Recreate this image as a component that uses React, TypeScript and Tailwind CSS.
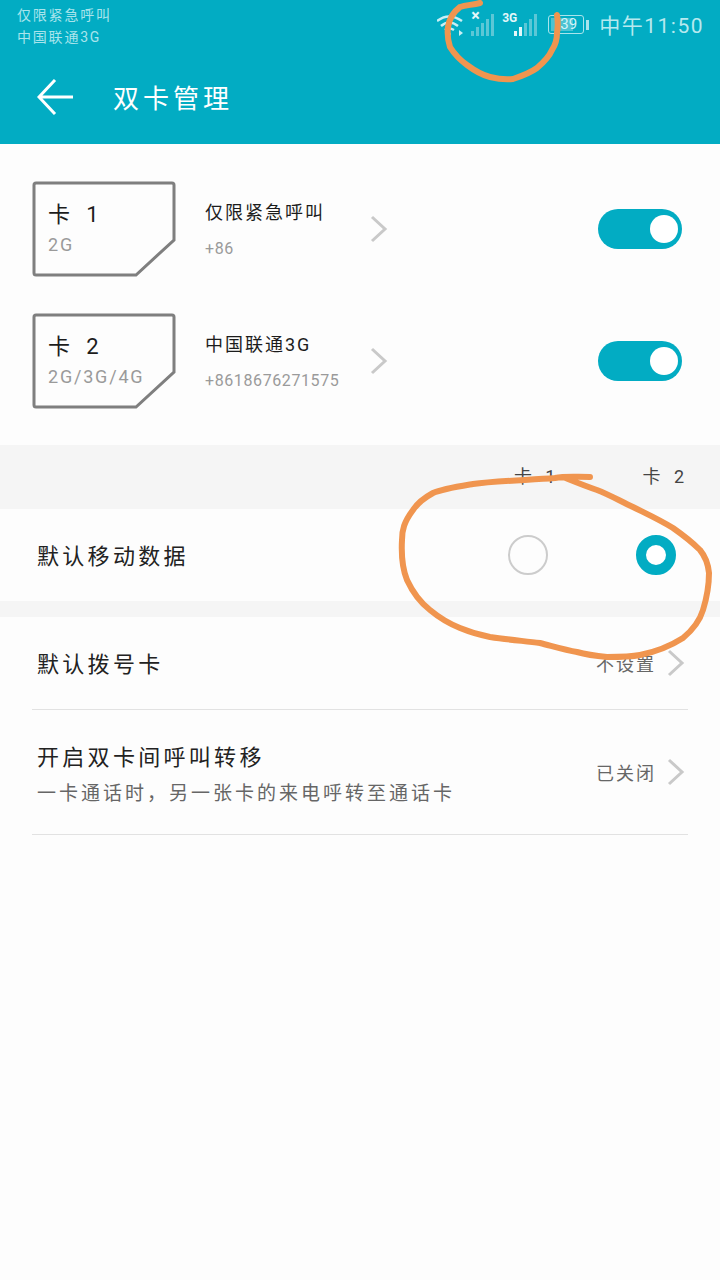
import React from "react";

interface SimRowProps {
  slot: string;
  bands: string;
  name: string;
  phone: string;
}

const Chevron = ({ className }: { className?: string }) => (
  <svg width="18" height="28" viewBox="0 0 18 28" fill="none" className={className}>
    <path d="M2 2 L15 14 L2 26" stroke="#c9c9c9" strokeWidth="3" />
  </svg>
);

const SignalBars = ({ active }: { active: number }) => (
  <div className="flex items-end gap-[2px] h-[22px]">
    {[5, 9, 13, 17, 22].map((h, i) => (
      <div
        key={h}
        className={i < active ? "w-[3px] bg-[#e4f7f9]" : "w-[3px] bg-[#5cc7d6]"}
        style={{ height: h }}
      />
    ))}
  </div>
);

const SimCard = ({ slot, bands }: { slot: string; bands: string }) => (
  <div className="relative w-[144px] h-[96px] pl-[16px] pt-[20px]">
    <svg width="144" height="96" viewBox="0 0 144 96" fill="none" className="absolute left-0 top-0">
      <path
        d="M2 4 Q2 2 4 2 L140 2 Q142 2 142 4 L142 59 L104 94 L4 94 Q2 94 2 92 Z"
        stroke="#7f7f7f"
        strokeWidth="3"
      />
    </svg>
    <div className="relative text-[22px] leading-[28px] text-[#1c1c1c] whitespace-pre">{slot}</div>
    <div className="relative mt-[4px] text-[18px] leading-[24px] text-[#9a9a9a] whitespace-nowrap tracking-[1.8px]">{bands}</div>
  </div>
);

const SimRow = ({ slot, bands, name, phone }: SimRowProps) => (
  <div className="flex items-center h-[96px]">
    <SimCard slot={slot} bands={bands} />
    <div className="ml-[29px] w-[165px] pt-[2px]">
      <div className="text-[18px] leading-[24px] tracking-[2px] text-[#1c1c1c] whitespace-nowrap">{name}</div>
      <div className="mt-[13px] text-[16px] leading-[22px] tracking-[0.6px] text-[#9a9a9a]">{phone}</div>
    </div>
    <Chevron />
    <div className="ml-auto w-[84px] h-[40px] rounded-full bg-[#02acc3] flex items-center justify-end pr-[4px]">
      <div className="w-[28px] h-[28px] rounded-full bg-white" />
    </div>
  </div>
);

export default function App() {
  return (
    <div
      lang="zh-CN"
      className="relative w-[720px] h-[1280px] overflow-hidden bg-[#fdfdfd] font-['Roboto','Noto_Sans_CJK_SC',sans-serif]"
    >
      <header className="h-[144px] bg-[#02acc3]">
        <div className="flex justify-between h-[52px] pl-[17px] pr-[16px]">
          <div className="pt-[4px] text-[14px] leading-[22px] tracking-[1.8px] text-[#a9e4ec]">
            <div>仅限紧急呼叫</div>
            <div>中国联通3G</div>
          </div>
          <div className="flex items-center h-[50px] pb-[1px]">
            {/* wifi with the small up/down arrows */}
            <svg width="27" height="22" viewBox="0 0 27 22" fill="none" className="mr-[7px]">
              <path d="M0 7 Q12 -2 25 7" stroke="#c9eff4" strokeWidth="2.5" />
              <path d="M4 12 Q12 5 21 12" stroke="#c9eff4" strokeWidth="2.5" />
              <path d="M8 16 Q12 13 17 16" stroke="#c9eff4" strokeWidth="2.5" />
              <circle cx="12" cy="20" r="1.8" fill="#c9eff4" />
              <path d="M22 16 L26 19 L22 22 Z" fill="#c9eff4" />
            </svg>
            <div className="relative mr-[8px]">
              <span className="absolute -top-[5px] left-0 text-[16px] leading-[14px] font-bold text-[#e4f7f9]">×</span>
              <SignalBars active={0} />
            </div>
            <div className="relative w-[35px] h-[22px] mr-[11px]">
              <span className="absolute -top-[3px] left-0 text-[12px] leading-[14px] font-bold text-[#e4f7f9]">3G</span>
              <div className="absolute bottom-0 right-0">
                <SignalBars active={2} />
              </div>
            </div>
            <div className="relative w-[36px] h-[19px] rounded-[3px] border border-[#a9e4ec] text-[15px] leading-[17px] text-right pr-[6px] text-[#d4f3f7]">
              <div className="absolute left-[2px] top-[2px] bottom-[2px] w-[22px] bg-[#4cc3d3]" />
              <span className="relative">39</span>
            </div>
            <div className="w-[3px] h-[10px] ml-[2px] mr-[10px] bg-[#a9e4ec]" />
            <div className="pt-[2px] text-[21px] leading-[28px] tracking-[1.5px] text-[#b7e9ef]">中午11:50</div>
          </div>
        </div>
        <div className="flex items-center h-[92px] pl-[37px] pb-[2px]">
          <svg width="37" height="36" viewBox="0 0 37 36" fill="none">
            <path d="M36 18 L2 18 M18 1 L2 18 L18 35" stroke="#ffffff" strokeWidth="3" />
          </svg>
          <div className="ml-[39px] pt-[4px] text-[26px] leading-[34px] tracking-[4px] text-white">双卡管理</div>
        </div>
      </header>

      <section className="pl-[32px] pr-[38px] pt-[37px] pb-[36px] flex flex-col gap-[36px]">
        <SimRow slot="卡   1" bands="2G" name="仅限紧急呼叫" phone="+86" />
        <SimRow slot="卡   2" bands="2G/3G/4G" name="中国联通3G" phone="+8618676271575" />
      </section>

      <div className="h-[64px] bg-[#f5f5f5] flex items-center justify-end gap-[87px] pr-[36px] text-[18px] leading-[24px] text-[#444444] whitespace-pre">
        <span>卡   1</span>
        <span>卡   2</span>
      </div>

      <div className="h-[92px] flex items-center pl-[37px] pr-[44px]">
        <span className="pt-[3px] text-[22px] tracking-[3.3px] text-[#222222]">默认移动数据</span>
        <div className="ml-auto flex items-center gap-[88px]">
          <div className="w-[40px] h-[40px] rounded-full border-2 border-[#cccccc]" />
          <div className="w-[40px] h-[40px] rounded-full border-[10px] border-[#02acc3] bg-white" />
        </div>
      </div>

      <div className="h-[16px] bg-[#f5f5f5]" />

      <div className="mx-[32px] h-[93px] border-b border-[#e2e2e2] flex items-center pl-[5px]">
        <span className="pt-[3px] text-[22px] tracking-[3.3px] text-[#222222]">默认拨号卡</span>
        <div className="ml-auto flex items-center gap-[11px] pr-[3px]">
          <span className="pt-[2px] text-[18px] tracking-[2px] text-[#666666]">不设置</span>
          <Chevron />
        </div>
      </div>

      <div className="mx-[32px] h-[125px] border-b border-[#e2e2e2] flex items-center pl-[5px]">
        <div className="pt-[4px]">
          <div className="text-[22px] leading-[32px] tracking-[3.3px] text-[#222222]">开启双卡间呼叫转移</div>
          <div className="mt-[7px] text-[19px] leading-[26px] tracking-[3px] text-[#666666] whitespace-nowrap">
            一卡通话时，另一张卡的来电呼转至通话卡
          </div>
        </div>
        <div className="ml-auto flex items-center gap-[11px] pr-[3px]">
          <span className="pt-[2px] text-[18px] tracking-[2px] text-[#666666]">已关闭</span>
          <Chevron />
        </div>
      </div>

      {/* orange marker strokes drawn over the page */}
      <svg width="720" height="1280" viewBox="0 0 720 1280" fill="none" className="absolute left-0 top-0 pointer-events-none">
        <path
          d="M590 477 C575 477 565 476 555 478 C530 480 495 481 473 484 C455 487 442 489 433 493 C422 499 417 504 413 510 C404 522 402 530 402 540 C401 558 403 570 407 580 C414 595 421 603 430 610 C442 620 450 624 460 628 C472 633 480 635 490 637 C510 640 525 641 540 643 C552 646 565 650 577 652 C588 655 597 656 607 657 C620 657 630 657 640 655 C660 651 672 645 683 638 C695 628 700 620 703 610 C707 597 709 585 709 573 C708 563 705 556 700 550 C692 542 683 535 673 528 C660 520 647 514 633 507 C620 501 610 495 597 490 C585 486 573 481 563 477"
          stroke="#f0954f"
          strokeWidth="6"
          strokeLinecap="round"
        />
        <path
          d="M480 3 C472 5 466 5 460 7 C452 13 449 20 448 27 C447 35 448 41 450 47 C455 55 460 60 467 65 C475 71 482 75 490 77 C498 79 505 80 513 79 C522 76 530 73 537 68 C544 62 549 57 552 50 C556 44 557 39 557 33 C558 27 558 21 557 15"
          stroke="#f0954f"
          strokeWidth="6"
          strokeLinecap="round"
        />
      </svg>
    </div>
  );
}
